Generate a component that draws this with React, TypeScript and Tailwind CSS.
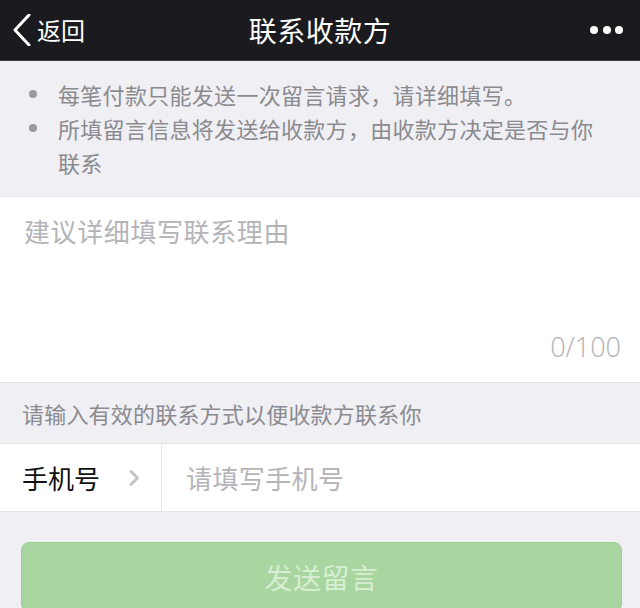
const font = { fontFamily: '"Noto Sans CJK SC", "Noto Sans", sans-serif' };

const BackIcon = () => (
  <svg width="18" height="32" viewBox="0 0 18 32" className="shrink-0">
    <polyline points="16,1 2,16 16,31" fill="none" stroke="#ffffff" strokeWidth="3" strokeLinecap="round" strokeLinejoin="round" />
  </svg>
);

const Chevron = () => (
  <svg width="10" height="16" viewBox="0 0 10 16">
    <polyline points="2,1.5 8.5,8 2,14.5" fill="none" stroke="#c0c0c5" strokeWidth="2.6" strokeLinecap="round" strokeLinejoin="round" />
  </svg>
);

const Bullet = ({ children }: { children: React.ReactNode }) => (
  <li className="flex">
    <span className="w-[58px] shrink-0 flex justify-end pr-[21px] pt-[13px]">
      <span className="w-[8px] h-[8px] rounded-full bg-[#9a9a9e]" />
    </span>
    <span className="w-[548px] tracking-[0.3px]">{children}</span>
  </li>
);

const App = () => {
  return (
    <div className="min-h-screen bg-[#efeff4] overflow-hidden" style={font}>
      {/* Nav bar */}
      <header className="h-[61px] bg-[#1b1a1e] grid grid-cols-[1fr_auto_1fr] items-center border-b border-[#3b3b40]">
        <div className="flex items-center gap-[6px] pl-[13px] text-white">
          <BackIcon />
          <span className="text-[24px] leading-none">返回</span>
        </div>
        <h1 className="text-white text-[28px] leading-none tracking-[0.5px]">联系收款方</h1>
        <div className="flex justify-end items-center gap-[4.5px] pr-[17px]">
          <span className="w-[8px] h-[8px] rounded-full bg-white" />
          <span className="w-[8px] h-[8px] rounded-full bg-white" />
          <span className="w-[8px] h-[8px] rounded-full bg-white" />
        </div>
      </header>

      {/* Notes */}
      <ul className="pt-[16px] pb-[17px] text-[22px] leading-[34px] text-[#8a8a8f]">
        <Bullet>每笔付款只能发送一次留言请求，请详细填写。</Bullet>
        <Bullet>所填留言信息将发送给收款方，由收款方决定是否与你联系</Bullet>
      </ul>

      {/* Message box */}
      <div className="h-[187px] bg-white border-y border-[#e3e3e8] flex flex-col justify-between pl-[24px] pr-[19px] pt-[17px] pb-[18px]">
        <p className="text-[26px] leading-[34px] tracking-[0.6px] text-[#b4b4b8]">建议详细填写联系理由</p>
        <p className="self-end text-[27px] leading-[34px] text-[#b0b0b4] font-light" style={{ fontFamily: '"Open Sans", sans-serif' }}>0/100</p>
      </div>

      {/* Contact hint */}
      <p className="h-[60px] flex items-center pl-[22px] text-[22px] tracking-[0.2px] text-[#8a8a8f]">
        请输入有效的联系方式以便收款方联系你
      </p>

      {/* Phone row */}
      <div className="h-[69px] bg-white border-y border-[#e3e3e8] flex items-stretch">
        <div className="w-[162px] flex items-center pl-[22px] border-r border-[#e5e5ea]">
          <span className="text-[26px] text-[#111111]">手机号</span>
          <span className="ml-[29px] flex items-center">
            <Chevron />
          </span>
        </div>
        <div className="flex items-center pl-[24px] text-[26px] tracking-[0.4px] text-[#b4b4b8]">请填写手机号</div>
      </div>

      {/* Submit */}
      <div className="px-[21px] pt-[30px]">
        <button className="w-[601px] h-[70px] rounded-[8px] bg-[#a8d5a0] border border-[#9ccd94] text-[28px] text-[#d6eed1] flex items-center justify-center tracking-[0.5px]">
          发送留言
        </button>
      </div>
    </div>
  );
};

export default App;
